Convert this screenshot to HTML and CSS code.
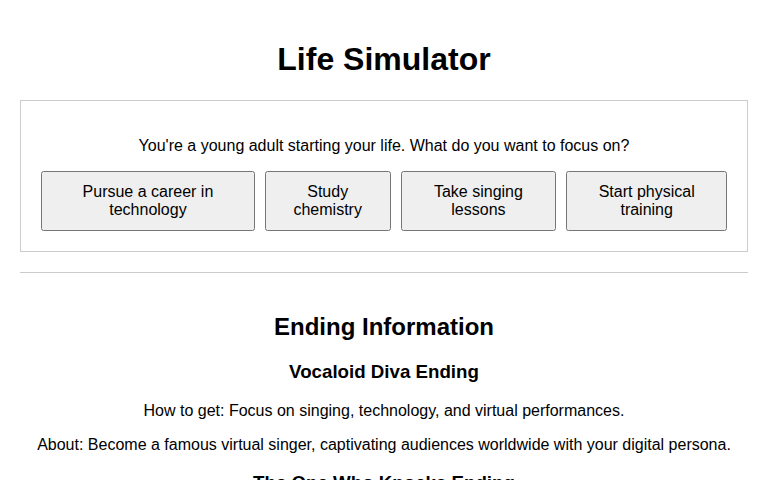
FILE: index.html
```html
<!DOCTYPE html>
<html lang="en">
<head>
<meta charset="utf-8">
<title>Life Simulator</title>
<link rel="stylesheet" href="styles.css">
</head>
<body>
<h1 class="title">Life Simulator</h1>
<div class="game">
  <p class="prompt">You're a young adult starting your life. What do you want to focus on?</p>
  <div class="choices">
    <button class="choice">Pursue a career in technology</button>
    <button class="choice">Study chemistry</button>
    <button class="choice">Take singing lessons</button>
    <button class="choice">Start physical training</button>
  </div>
</div>
<hr class="divider">
<div class="endings">
  <h2 class="endings-title">Ending Information</h2>
  <div class="ending">
    <h3 class="ending-name">Vocaloid Diva Ending</h3>
    <p class="ending-text">How to get: Focus on singing, technology, and virtual performances.</p>
    <p class="ending-text">About: Become a famous virtual singer, captivating audiences worldwide with your digital persona.</p>
  </div>
  <div class="ending">
    <h3 class="ending-name">The One Who Knocks Ending</h3>
    <p class="ending-text">How to get: Focus on chemistry and building an empire.</p>
    <p class="ending-text">About: Become the most feared chemist in the business.</p>
  </div>
</div>
</body>
</html>
```
FILE: styles.css
```css
html, body {
  margin: 0;
  background: #fff;
}
body {
  padding: 20px;
  font-family: "Liberation Sans", Arial, sans-serif;
  color: #000;
  text-align: center;
}
.title {
  font-size: 32px;
  margin: 21.44px 0;
}
.game {
  border: 1px solid #ccc;
  padding: 20px;
  margin-bottom: 20px;
}
.prompt {
  font-size: 16px;
  margin: 16px 0;
}
.choices {
  display: flex;
  gap: 10px;
}
.choice {
  font-family: "Liberation Sans", Arial, sans-serif;
  font-size: 16px;
  padding: 10px;
  color: #000;
}
.divider {
  border: 0;
  border-top: 1px solid #ccc;
  margin: 0 0 20px;
}
.endings {
  padding-top: 20px;
}
.endings-title {
  font-size: 24px;
  margin: 0 0 19.92px;
}
.ending-name {
  font-size: 18.72px;
  margin: 18.72px 0;
}
.ending-text {
  font-size: 16px;
  margin: 16px 0;
}
```
